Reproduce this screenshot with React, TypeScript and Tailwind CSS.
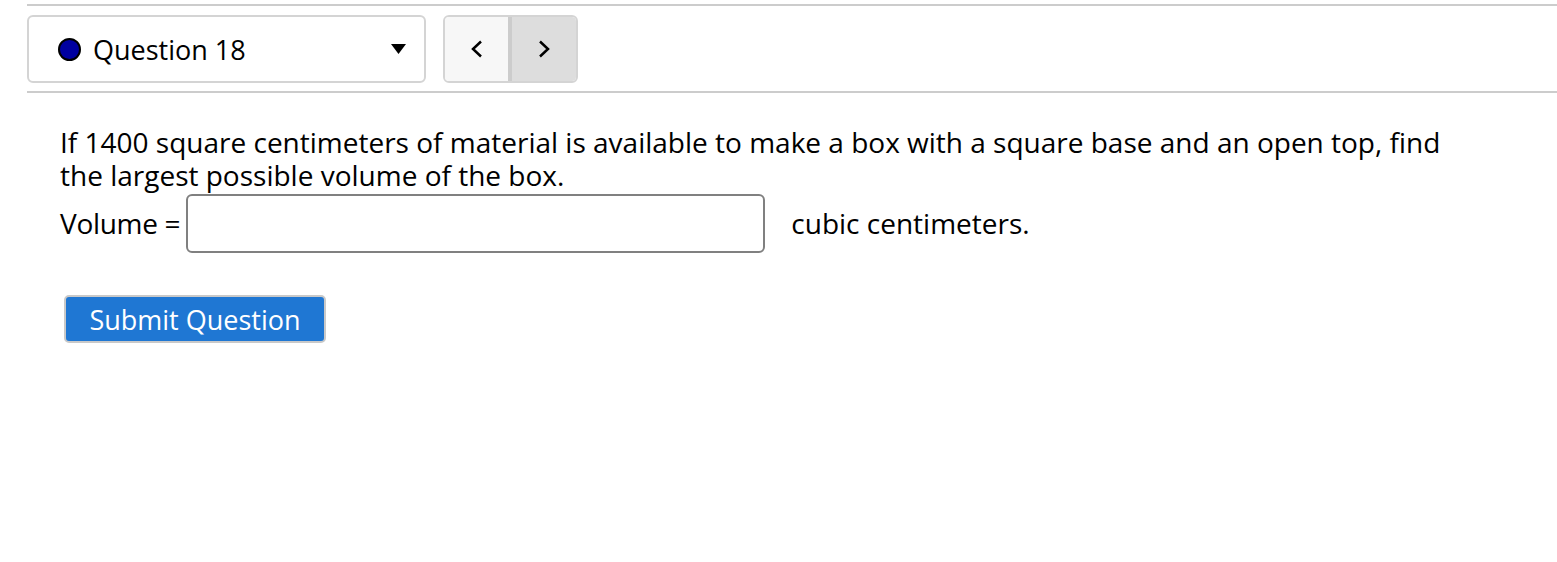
export default function App() {
  return (
    <div className="w-[1557px] h-[562px] bg-white text-black font-['Open_Sans',sans-serif]">
      <div className="pl-[27px] pt-[4px]">
        <div className="h-[2px] bg-[#cccccc]" />
        <div className="flex items-center mt-[9px] h-[68px]">
          <div className="flex items-center w-[399px] h-[68px] border-2 border-[#d4d4d4] rounded-[6px] pl-[29px] pr-[18px]">
            <span className="w-[23px] h-[23px] rounded-full bg-[#0000a0] border-2 border-black shrink-0" />
            <span className="ml-[12px] text-[27px] leading-none flex-1">Question 18</span>
            <svg width="15" height="10" viewBox="0 0 15 10">
              <polygon points="0,0 15,0 7.5,10" fill="#000" />
            </svg>
          </div>
          <div className="flex ml-[17px] h-[68px] w-[135px] border-2 border-[#d4d4d4] rounded-[6px] overflow-hidden">
            <div className="w-[63px] bg-[#f7f7f7] flex items-center justify-center">
              <svg width="13" height="18" viewBox="0 0 13 18">
                <polyline points="11,1.5 3,9 11,16.5" fill="none" stroke="#000" strokeWidth="2.5" />
              </svg>
            </div>
            <div className="w-[4px] bg-[#cccccc]" />
            <div className="flex-1 bg-[#dddddd] flex items-center justify-center">
              <svg width="13" height="18" viewBox="0 0 13 18">
                <polyline points="2,1.5 10,9 2,16.5" fill="none" stroke="#000" strokeWidth="2.5" />
              </svg>
            </div>
          </div>
        </div>
        <div className="h-[2px] bg-[#cccccc] mt-[8px]" />
      </div>
      <div className="pl-[60px] pr-[100px] pt-[33px]">
        <p className="text-[28px] leading-[33px]">
          If 1400 square centimeters of material is available to make a box with a square base and an open top, find the largest possible volume of the box.
        </p>
        <div className="flex items-center mt-[2px]">
          <span className="text-[28px] leading-[33px] tracking-[-0.3px]">Volume =</span>
          <input
            type="text"
            className="ml-[6px] w-[579px] h-[59px] border-2 border-[#808080] rounded-[6px] outline-none px-2 text-[28px]"
          />
          <span className="ml-[26px] text-[28px] leading-[33px]">cubic centimeters.</span>
        </div>
        <button className="mt-[42px] ml-[4px] w-[262px] h-[48px] bg-[#1f77d3] border-2 border-[#c9c9c9] rounded-[5px] text-white text-[27px] leading-none flex items-center justify-center">
          Submit Question
        </button>
      </div>
    </div>
  );
}
